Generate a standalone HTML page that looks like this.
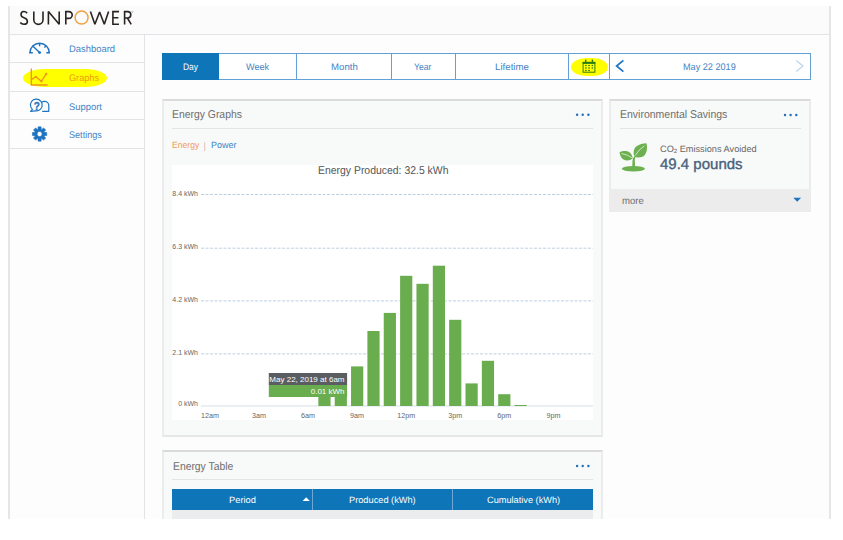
<!DOCTYPE html>
<html><head><meta charset="utf-8">
<style>
*{margin:0;padding:0;box-sizing:border-box}
html,body{width:843px;height:540px;overflow:hidden;background:#fff;font-family:"Liberation Sans",sans-serif}
.a{position:absolute}
.t{position:absolute;white-space:nowrap;line-height:1;text-rendering:geometricPrecision}
</style></head><body>
<div class="a" style="left:8px;top:6px;width:823px;height:513px;background:#fdfdfd;border-left:2px solid #e6e6e9;border-right:2px solid #e6e6e9"></div>
<div class="a" style="left:10px;top:6px;width:819px;height:28px;background:#fbfbfb"></div>
<!-- header -->
<div class="a" style="left:10px;top:34px;width:819px;height:1px;background:#e1e3e6"></div>
<svg class="a" style="left:0;top:0" width="150" height="34"><g fill="none" stroke="#2a2523" stroke-width="1.6" stroke-miterlimit="1.5" transform="translate(0,0.4)">
<path d="M27.1 12.8 Q25.9 11.1 23.8 11.1 Q21 11.1 21 14.2 Q21 16.5 24 17.4 Q27.4 18.4 27.4 21 Q27.4 23.9 23.9 23.9 Q21.5 23.9 20.3 22.1"/>
<path d="M33.8 11 V19.4 A4.6 4.6 0 0 0 43 19.4 V11"/>
<path d="M48.4 24.1 V11.2 L59.2 23.9 V11"/>
<path d="M65.8 24.1 V11.2 H68.8 A3.4 3.4 0 0 1 68.8 18 H65.8"/>
<path d="M90.4 11 L94.9 23.9 L99.6 11.6 L104.3 23.9 L108.6 11"/>
<path d="M119 11.2 H112.9 V23.9 H119 M112.9 17.4 H118.4"/>
<path d="M124.6 24.1 V11.2 H127.6 A3.2 3.2 0 0 1 127.6 17.6 H124.6 M127.4 17.6 L131.2 24"/>
</g>
<circle cx="81.6" cy="17.6" r="6.5" fill="none" stroke="#efa043" stroke-width="1.5"/>
<circle cx="132.5" cy="11.8" r="0.7" fill="none" stroke="#888" stroke-width="0.4"/>
</svg>
<!-- sidebar -->
<div class="a" style="left:144px;top:35px;width:1px;height:484px;background:#e1e3e6"></div>
<div class="a" style="left:10px;top:62px;width:134px;height:1px;background:#e1e3e6"></div>
<div class="a" style="left:10px;top:91px;width:134px;height:1px;background:#e1e3e6"></div>
<div class="a" style="left:10px;top:119px;width:134px;height:1px;background:#e1e3e6"></div>
<div class="a" style="left:10px;top:148px;width:134px;height:1px;background:#e1e3e6"></div>
<div class="t" style="left:69.20px;top:45px;font-size:9.6px;font-weight:400;color:#4485c8;transform:scale(0.9807,0.9993);transform-origin:0 7px;">Dashboard</div>
<div class="a" style="left:23px;top:68.5px;width:84px;height:18.5px;border-radius:22px/9.25px;background:#ffff00"></div>
<div class="t" style="left:69.00px;top:74px;font-size:9.6px;font-weight:400;color:#f29a14;transform:scale(0.9538,0.9993);transform-origin:0 7px;">Graphs</div>
<div class="t" style="left:69.00px;top:103px;font-size:9.6px;font-weight:400;color:#4485c8;transform:scale(0.9783,0.9993);transform-origin:0 7px;">Support</div>
<div class="t" style="left:69.00px;top:131px;font-size:9.6px;font-weight:400;color:#4485c8;transform:scale(0.9464,0.9993);transform-origin:0 7px;">Settings</div>
<!-- tabs -->
<div class="a" style="left:162px;top:53px;width:649px;height:27px;border:1px solid #62a0d6;background:#fff"></div>
<div class="a" style="left:162px;top:53px;width:57px;height:27px;background:#0e75b9"></div>
<div class="t" style="left:182.90px;top:63px;font-size:9.6px;font-weight:400;color:#fff;transform:scale(0.8805,0.9993);transform-origin:0 7px;">Day</div>
<div class="t" style="left:245.80px;top:63px;font-size:9.6px;font-weight:400;color:#4583c4;transform:scale(0.9490,0.9917);transform-origin:0 7px;">Week</div>
<div class="a" style="left:296px;top:53px;width:1px;height:27px;background:#62a0d6"></div>
<div class="t" style="left:330.50px;top:63px;font-size:9.6px;font-weight:400;color:#4583c4;transform:scale(1.0065,0.9917);transform-origin:0 7px;">Month</div>
<div class="a" style="left:391px;top:53px;width:1px;height:27px;background:#62a0d6"></div>
<div class="t" style="left:414.00px;top:63px;font-size:9.6px;font-weight:400;color:#4583c4;transform:scale(0.8916,0.9917);transform-origin:0 7px;">Year</div>
<div class="a" style="left:455px;top:53px;width:1px;height:27px;background:#62a0d6"></div>
<div class="t" style="left:495.40px;top:63px;font-size:9.6px;font-weight:400;color:#4583c4;transform:scale(1.0103,0.9917);transform-origin:0 7px;">Lifetime</div>
<div class="a" style="left:568px;top:53px;width:1px;height:27px;background:#62a0d6"></div>
<div class="a" style="left:571px;top:57.8px;width:37px;height:18px;border-radius:15px/9px;background:#ffff00"></div>
<div class="a" style="left:609px;top:53px;width:1px;height:27px;background:#62a0d6"></div>
<div class="t" style="left:683.40px;top:63px;font-size:9.6px;font-weight:400;color:#4583c4;transform:scale(0.9504,0.9917);transform-origin:0 7px;">May 22 2019</div>
<!-- energy graphs card -->
<div class="a" style="left:162px;top:99px;width:441px;height:338px;background:#f8f9f9;border:2px solid #ececec;border-top:2px solid #dadada;border-bottom:2px solid #e5e6e8"></div>
<div class="t" style="left:172.40px;top:110px;font-size:10.6px;font-weight:400;color:#6e6e6e;transform:scale(0.9809,1.0695);transform-origin:0 8px;">Energy Graphs</div>
<div class="a" style="left:172px;top:128px;width:421px;height:1px;background:#e2e4e6"></div>
<div class="t" style="left:172.10px;top:140px;font-size:9.4px;font-weight:400;color:#f29a5c;transform:scale(0.9162,0.9741);transform-origin:0 8px;">Energy</div>
<div class="t" style="left:203.90px;top:141px;font-size:9.4px;font-weight:400;color:#8f7a72;transform:scale(0.5500,1.0000);transform-origin:0 8px;">|</div>
<div class="t" style="left:210.50px;top:140px;font-size:9.4px;font-weight:400;color:#3b84c6;transform:scale(0.9565,0.9741);transform-origin:0 8px;">Power</div>
<div class="a" style="left:172px;top:165px;width:421px;height:255px;background:#fff"></div>
<div class="t" style="left:317.70px;top:166px;font-size:10.7px;font-weight:400;color:#555;transform:scale(0.9759,1.0596);transform-origin:0 8px;">Energy Produced: 32.5 kWh</div>
<svg class="a" style="left:0;top:0" width="843" height="540" font-family="Liberation Sans, sans-serif">
<line x1="201" y1="194.5" x2="593" y2="194.5" stroke="#bdd0e2" stroke-width="1" stroke-dasharray="3,1.5"/>
<text x="198" y="195.6" text-anchor="end" font-size="7" fill="#666">8.4 kWh</text>
<line x1="201" y1="248.2" x2="593" y2="248.2" stroke="#bdd0e2" stroke-width="1" stroke-dasharray="3,1.5"/>
<text x="198" y="249.3" text-anchor="end" font-size="7" fill="#666">6.3 kWh</text>
<line x1="201" y1="300.9" x2="593" y2="300.9" stroke="#bdd0e2" stroke-width="1" stroke-dasharray="3,1.5"/>
<text x="198" y="302.0" text-anchor="end" font-size="7" fill="#666">4.2 kWh</text>
<line x1="201" y1="353.9" x2="593" y2="353.9" stroke="#bdd0e2" stroke-width="1" stroke-dasharray="3,1.5"/>
<text x="198" y="355.0" text-anchor="end" font-size="7" fill="#666">2.1 kWh</text>
<text x="198" y="406.3" text-anchor="end" font-size="7" fill="#666">0 kWh</text>
<rect x="201" y="405.3" width="392" height="1.3" fill="#e0e7ef"/>
<rect x="318.35" y="390" width="12.2" height="16.00" fill="#6aad4f"/>
<rect x="334.70" y="388" width="12.2" height="18.00" fill="#6aad4f"/>
<rect x="351.05" y="366.4" width="12.2" height="39.60" fill="#6aad4f"/>
<rect x="367.40" y="331" width="12.2" height="75.00" fill="#6aad4f"/>
<rect x="383.75" y="312.9" width="12.2" height="93.10" fill="#6aad4f"/>
<rect x="400.10" y="275.8" width="12.2" height="130.20" fill="#6aad4f"/>
<rect x="416.45" y="283.8" width="12.2" height="122.20" fill="#6aad4f"/>
<rect x="432.80" y="265.7" width="12.2" height="140.30" fill="#6aad4f"/>
<rect x="449.15" y="319.8" width="12.2" height="86.20" fill="#6aad4f"/>
<rect x="465.50" y="383.4" width="12.2" height="22.60" fill="#6aad4f"/>
<rect x="481.85" y="360.8" width="12.2" height="45.20" fill="#6aad4f"/>
<rect x="498.20" y="394.2" width="12.2" height="11.80" fill="#6aad4f"/>
<rect x="514.55" y="405" width="12.2" height="1.00" fill="#6aad4f"/>
<text x="210.0" y="418.3" text-anchor="middle" font-size="7.2" fill="#666">12am</text>
<text x="259.1" y="418.3" text-anchor="middle" font-size="7.2" fill="#666">3am</text>
<text x="308.1" y="418.3" text-anchor="middle" font-size="7.2" fill="#666">6am</text>
<text x="357.1" y="418.3" text-anchor="middle" font-size="7.2" fill="#666">9am</text>
<text x="406.2" y="418.3" text-anchor="middle" font-size="7.2" fill="#666">12pm</text>
<text x="455.2" y="418.3" text-anchor="middle" font-size="7.2" fill="#666">3pm</text>
<text x="504.3" y="418.3" text-anchor="middle" font-size="7.2" fill="#666">6pm</text>
<text x="553.4" y="418.3" text-anchor="middle" font-size="7.2" fill="#666">9pm</text>
<rect x="268.8" y="373" width="78.3" height="12" fill="#5a5d62"/>
<rect x="268.8" y="385" width="78.3" height="12" fill="#6aad4f"/>
<text x="344.5" y="381.7" text-anchor="end" font-size="8" fill="#fff">May 22, 2019 at 6am</text>
<text x="344.5" y="393.6" text-anchor="end" font-size="8" fill="#fff">0.01 kWh</text>
</svg>
<!-- env card -->
<div class="a" style="left:609px;top:99px;width:202px;height:112.5px;background:#f8f9f9;border:2px solid #ececec;border-top:2px solid #dadada"></div>
<div class="t" style="left:620.00px;top:110px;font-size:10.6px;font-weight:400;color:#6e6e6e;transform:scale(0.9903,1.0695);transform-origin:0 8px;">Environmental Savings</div>
<div class="a" style="left:620px;top:128px;width:181px;height:1px;background:#e2e4e6"></div>
<div class="t" style="left:660px;top:145.4px;font-size:9.2px;color:#666">CO<sub style="font-size:6px;vertical-align:-1px">2</sub> Emissions Avoided</div>
<div class="t" style="left:660px;top:157px;font-size:15px;-webkit-text-stroke:0.35px #46617c;color:#46617c">49.4 pounds</div>
<div class="a" style="left:610px;top:189px;width:200px;height:21px;background:#ececec"></div>
<div class="t" style="left:622.30px;top:197px;font-size:10px;font-weight:400;color:#707070;transform:scale(0.9603,1.0000);transform-origin:0 7px;">more</div>
<!-- table card -->
<div class="a" style="left:162px;top:450px;width:441px;height:69px;background:#f8f9f9;border:2px solid #ececec;border-top:2px solid #dadada;border-bottom:none"></div>
<div class="t" style="left:172.70px;top:462px;font-size:10.6px;font-weight:400;color:#6e6e6e;transform:scale(0.9767,1.0695);transform-origin:0 8px;">Energy Table</div>
<div class="a" style="left:172px;top:479px;width:421px;height:1px;background:#e2e4e6"></div>
<div class="a" style="left:172px;top:489px;width:421px;height:21px;background:#0e75b9"></div>
<div class="a" style="left:172px;top:510px;width:421px;height:9px;background:#ebeced"></div>
<div class="a" style="left:312px;top:489px;width:1px;height:21px;background:#6fa6d6"></div>
<div class="a" style="left:452px;top:489px;width:1px;height:21px;background:#6fa6d6"></div>
<div class="t" style="left:228.60px;top:496px;font-size:9.3px;font-weight:400;color:#fff;transform:scale(1.0036,0.9846);transform-origin:0 7px;">Period</div>
<div class="t" style="left:349.40px;top:496px;font-size:9.3px;font-weight:400;color:#fff;transform:scale(0.9930,0.9846);transform-origin:0 7px;">Produced (kWh)</div>
<div class="t" style="left:486.60px;top:496px;font-size:9.3px;font-weight:400;color:#fff;transform:scale(0.9895,0.9846);transform-origin:0 7px;">Cumulative (kWh)</div>
<svg class="a" style="left:0;top:0" width="843" height="540">
<!-- gauge -->
<g fill="none" stroke="#1f74c1" stroke-width="1.4">
<path d="M29.9 52.9 A9.7 9.7 0 0 1 49.3 52.9"/>
<path d="M29.2 52.7 H32.8 M46.3 52.7 H50"/>
<path d="M33 46.2 L39.6 52.6" stroke-linecap="round"/>
<path d="M39.6 43.8 V46.3"/>
<path d="M45.8 46 L44.4 47.6"/>
</g>
<circle cx="39.6" cy="52.6" r="1.45" fill="#1f74c1"/>
<!-- graphs icon -->
<g fill="none" stroke="#f0921e" stroke-width="1.3">
<path d="M31.3 68.6 V85 H47.6"/>
<path d="M31.3 79.6 L35.8 76.8 L41.4 81.3 L46.2 73.9"/>
</g>
<g fill="#f0921e"><circle cx="35.8" cy="76.8" r="1"/><circle cx="41.4" cy="81.3" r="1.1"/><circle cx="46.2" cy="73.9" r="1.2"/></g>
<!-- support icon -->
<g fill="none" stroke="#1f74c1" stroke-width="1.2" stroke-linejoin="round">
<path d="M32.4 109.4 A5.9 5.9 0 1 1 35.4 110.8 L30.5 111.3 Z"/>
<path d="M41.6 102.4 Q42.8 101.4 44.5 101.4 A4.3 4.3 0 0 1 48.8 105.7 L48.8 111.3 L42.2 111.3"/>
</g>
<text x="36.9" y="109.5" text-anchor="middle" font-family="Liberation Sans, sans-serif" font-weight="bold" font-size="10" fill="#1f74c1" stroke="#1f74c1" stroke-width="0.3">?</text>
<!-- gear -->
<path fill="#1f74c1" stroke="#1f74c1" stroke-width="0.6" stroke-linejoin="round" fill-rule="evenodd" d="M37.97 129.27 L38.08 126.86 L41.12 126.86 L41.23 129.27 L41.79 129.51 L43.58 127.88 L45.72 130.02 L44.09 131.81 L44.33 132.37 L46.74 132.48 L46.74 135.52 L44.33 135.63 L44.09 136.19 L45.72 137.98 L43.58 140.12 L41.79 138.49 L41.23 138.73 L41.12 141.14 L38.08 141.14 L37.97 138.73 L37.41 138.49 L35.62 140.12 L33.48 137.98 L35.11 136.19 L34.87 135.63 L32.46 135.52 L32.46 132.48 L34.87 132.37 L35.11 131.81 L33.48 130.02 L35.62 127.88 L37.41 129.51Z M39.6 131.5 A2.5 2.5 0 1 0 39.61 131.5Z"/>
<!-- calendar -->
<g fill="#2a7a12">
<rect x="582.7" y="61.9" width="12.6" height="2.0"/>
<rect x="585" y="59.6" width="1.4" height="2.6"/>
<rect x="591.7" y="59.6" width="1.4" height="2.6"/>
<rect x="585.1" y="64.9" width="1.5" height="1.2"/><rect x="588.3" y="64.9" width="1.5" height="1.2"/><rect x="591.6" y="64.9" width="1.5" height="1.2"/>
<rect x="585.1" y="67.4" width="1.5" height="1.2"/><rect x="588.3" y="67.4" width="1.5" height="1.2"/><rect x="591.6" y="67.4" width="1.5" height="1.2"/>
<rect x="585.1" y="69.9" width="1.5" height="1.2"/><rect x="588.3" y="69.9" width="1.5" height="1.2"/>
</g>
<rect x="583.1" y="62.4" width="11.8" height="9.8" fill="none" stroke="#2a7a12" stroke-width="0.95"/>
<!-- chevrons -->
<path d="M623.4 60.4 L616.6 66 L623.4 71.6" fill="none" stroke="#1f74c1" stroke-width="1.7"/>
<path d="M796.3 60.4 L803 66 L796.3 71.6" fill="none" stroke="#bcd7ee" stroke-width="1.3"/>
<!-- dots -->
<g fill="#1f6fbf">
<circle cx="577.1" cy="114.8" r="1.2"/><circle cx="582.7" cy="114.8" r="1.2"/><circle cx="588.4" cy="114.8" r="1.2"/>
<circle cx="785" cy="115" r="1.2"/><circle cx="790.6" cy="115" r="1.2"/><circle cx="796.3" cy="115" r="1.2"/>
<circle cx="577.1" cy="466" r="1.2"/><circle cx="582.7" cy="466" r="1.2"/><circle cx="588.4" cy="466" r="1.2"/>
</g>
<!-- more caret -->
<path d="M793.3 197.7 H801.1 L797.2 201.7Z" fill="#1f74c1"/>
<!-- sort caret -->
<path d="M302.6 500.9 H309.8 L306.2 497.3Z" fill="#fff"/>
<!-- plant -->
<g fill="#6cb04f">
<ellipse cx="633.4" cy="168.8" rx="11.6" ry="2.75"/>
<path d="M632.2 169 L632.5 160.5 Q632.8 157.6 634.3 156.4 L635.5 157.3 Q634.6 158.8 634.8 161 L635.3 169Z"/>
<path d="M619.5 152.2 C622.5 150.8 627.5 150.3 630.3 153 C632 154.8 632.6 156.8 632.6 158.5 C630 160.6 626.5 161.2 623.5 159.5 C621 158 620 155 619.5 152.2Z"/>
<path d="M634.5 156.8 C633 153 633.5 148.5 636.5 146.3 C639.5 144 643 143.8 646.4 143.3 C647.6 147 647.2 152.3 644.6 155.2 C642.3 157.6 638 158 634.5 156.8Z"/>
</g>
<g fill="none" stroke="#ffffff" stroke-width="0.7" opacity="0.95">
<path d="M621.4 153.5 Q627.5 154.5 632.1 157.8"/>
<path d="M644.4 145.8 Q638.5 149.5 635.2 155.6"/>
</g>
</svg>
</body></html>
